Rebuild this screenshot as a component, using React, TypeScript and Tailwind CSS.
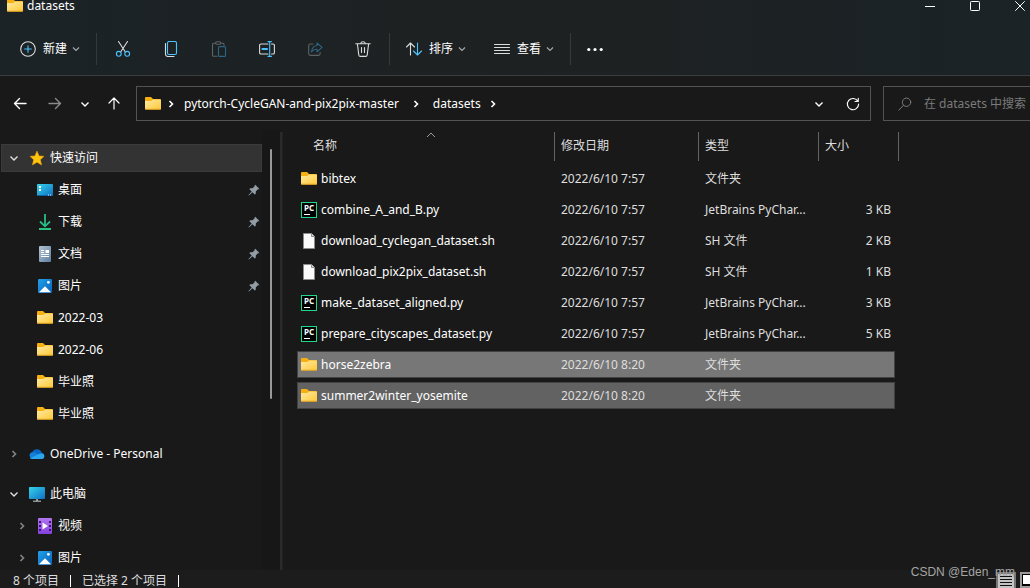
import type { ReactNode } from "react";

type IconName =
  | "folder"
  | "pycharm"
  | "file"
  | "star"
  | "desktop"
  | "download"
  | "document"
  | "picture"
  | "cloud"
  | "computer"
  | "video";

type TreeItem = {
  icon: IconName;
  label: string;
  level: number;
  pinned?: boolean;
  expand?: "open" | "closed";
  active?: boolean;
};

type FileItem = {
  icon: IconName;
  name: string;
  date: string;
  type: string;
  size?: string;
  tint?: string;
};

const treeGroups: TreeItem[][] = [
  [
    { icon: "star", label: "快速访问", level: 0, expand: "open", active: true },
    { icon: "desktop", label: "桌面", level: 1, pinned: true },
    { icon: "download", label: "下载", level: 1, pinned: true },
    { icon: "document", label: "文档", level: 1, pinned: true },
    { icon: "picture", label: "图片", level: 1, pinned: true },
    { icon: "folder", label: "2022-03", level: 1 },
    { icon: "folder", label: "2022-06", level: 1 },
    { icon: "folder", label: "毕业照", level: 1 },
    { icon: "folder", label: "毕业照", level: 1 },
  ],
  [{ icon: "cloud", label: "OneDrive - Personal", level: 0, expand: "closed" }],
  [
    { icon: "computer", label: "此电脑", level: 0, expand: "open" },
    { icon: "video", label: "视频", level: 1, expand: "closed" },
    { icon: "picture", label: "图片", level: 1, expand: "closed" },
  ],
];

const files: FileItem[] = [
  { icon: "folder", name: "bibtex", date: "2022/6/10 7:57", type: "文件夹" },
  { icon: "pycharm", name: "combine_A_and_B.py", date: "2022/6/10 7:57", type: "JetBrains PyChar...", size: "3 KB" },
  { icon: "file", name: "download_cyclegan_dataset.sh", date: "2022/6/10 7:57", type: "SH 文件", size: "2 KB" },
  { icon: "file", name: "download_pix2pix_dataset.sh", date: "2022/6/10 7:57", type: "SH 文件", size: "1 KB" },
  { icon: "pycharm", name: "make_dataset_aligned.py", date: "2022/6/10 7:57", type: "JetBrains PyChar...", size: "3 KB" },
  { icon: "pycharm", name: "prepare_cityscapes_dataset.py", date: "2022/6/10 7:57", type: "JetBrains PyChar...", size: "5 KB" },
  { icon: "folder", name: "horse2zebra", date: "2022/6/10 8:20", type: "文件夹", tint: "bg-[#777777]" },
  { icon: "folder", name: "summer2winter_yosemite", date: "2022/6/10 8:20", type: "文件夹", tint: "bg-[#626262]" },
];

function ItemIcon({ name }: { name: IconName }) {
  if (name === "pycharm") {
    return (
      <span className="flex size-4 shrink-0 flex-col border border-[#21d789] bg-black pt-px pl-[2px] text-[8px] leading-[8px] font-bold text-white">
        <span>PC</span>
        <span className="mt-[2px] h-px w-[6px] bg-white" />
      </span>
    );
  }
  return (
    <svg viewBox="0 0 16 16" className="size-4 shrink-0" aria-hidden="true">
      {name === "folder" && (
        <>
          <path d="M0 2Q0 1 1 1H6L8 3H15Q16 3 16 4V8H0Z" fill="#f8b010" />
          <path d="M0 5.1H6.2L8 3.5H15.2Q16 3.5 16 4.5V12.7Q16 13.5 15.2 13.5H.8Q0 13.5 0 12.7Z" fill="url(#folderFill)" />
          <path d="M0 12.8H16Q16 13.8 15.2 13.8H.8Q0 13.8 0 12.8Z" fill="#e0a021" />
        </>
      )}
      {name === "file" && (
        <>
          <path d="M2.5.5H10.5L13.5 3.5V15.5H2.5Z" fill="#fafafa" stroke="#8c8c8c" />
          <path d="M10.5.5V3.5H13.5" fill="#ddd" stroke="#8c8c8c" />
        </>
      )}
      {name === "star" && (
        <path d="M8 1L10.1 5.9L15 6.3L11.4 9.8L12.6 15L8 12.2L3.4 15L4.6 9.8L1 6.3L5.9 5.9Z" fill="#ffc40c" stroke="#f0a30a" strokeWidth=".5" />
      )}
      {name === "desktop" && (
        <>
          <rect y="2" width="16" height="12" rx="1" fill="url(#screenFill)" />
          <path d="M2 4h2v2H2zM2 7h2v2H2z" fill="#fff" />
          <path d="M0 13H16V13.2Q16 14 15 14H1Q0 14 0 13Z" fill="#0c63a8" />
          <path d="M11 12.4h1v1h-1zM13 12.4h1v1h-1z" fill="#d6f0ff" />
        </>
      )}
      {name === "download" && (
        <>
          <path d="M8 0V12M3 7.5L8 12.3L13 7.5" fill="none" stroke="#27bd87" strokeWidth="1.8" />
          <path d="M2 15H14" stroke="#2fd48e" strokeWidth="1.8" />
        </>
      )}
      {name === "document" && (
        <>
          <rect x="2" width="12" height="16" rx="1" fill="url(#docFill)" />
          <path d="M4 4.5H7M4 6.5H7M4 8.5H12M4 10.5H12" stroke="#fff" />
          <path d="M8.5 4H12V7H8.5Z" fill="#fff" />
        </>
      )}
      {name === "picture" && (
        <>
          <rect x="1" y="1" width="14" height="14" rx="1.2" fill="url(#picFill)" />
          <path d="M2 14.2L8 8.3L14 14.2Z" fill="#fff" />
          <circle cx="11.4" cy="4.3" r="1.4" fill="#fff" />
        </>
      )}
      {name === "cloud" && (
        <>
          <path d="M3.5 13A3.5 3.5 0 0 1 3.2 6.2A5.2 5.2 0 0 1 12.8 6.8A3.2 3.2 0 0 1 13 13Z" fill="#0a66c2" />
          <path d="M3.5 13A3.5 3.5 0 0 1 3.2 6.2Q6 6 9.5 8.6L5 13Z" fill="#137fd8" />
          <path d="M3 13Q2 13 1 12.2L9 8.4Q11 7 13.5 7.6A2.8 2.8 0 0 1 13.2 13Z" fill="#2aa5ee" />
        </>
      )}
      {name === "computer" && (
        <>
          <rect y="1" width="16" height="12" rx=".8" fill="url(#screenFill)" />
          <path d="M7 13H9V15H7Z" fill="#8d949a" />
          <path d="M4 15.2H12" stroke="#c5cace" />
        </>
      )}
      {name === "video" && (
        <>
          <rect x="1" width="14" height="16" rx="1" fill="url(#videoFill)" />
          <path d="M2 3h2v2H2zM2 7h2v2H2zM2 11h2v2H2zM12 3h2v2h-2zM12 7h2v2h-2zM12 11h2v2h-2z" fill="#3b1474" />
          <path d="M5.5 4.5L11 8L5.5 11.5Z" fill="#fff" />
        </>
      )}
    </svg>
  );
}

// shared gradients, referenced by id from the item icons
function IconDefs() {
  return (
    <svg className="absolute size-0" aria-hidden="true">
      <defs>
        <linearGradient id="folderFill" x1="0" y1="0" x2="1" y2="1">
          <stop offset="0" stopColor="#ffe9a2" />
          <stop offset="1" stopColor="#ffc937" />
        </linearGradient>
        <linearGradient id="screenFill" x1="0" y1="0" x2="1" y2="1">
          <stop offset="0" stopColor="#35d3e8" />
          <stop offset="1" stopColor="#0f6fc5" />
        </linearGradient>
        <linearGradient id="docFill" x1="0" y1="0" x2="1" y2="1">
          <stop offset="0" stopColor="#b3c4d6" />
          <stop offset="1" stopColor="#5d7e9d" />
        </linearGradient>
        <linearGradient id="picFill" x1="0" y1="0" x2="1" y2="1">
          <stop offset="0" stopColor="#22a0ea" />
          <stop offset="1" stopColor="#0863bd" />
        </linearGradient>
        <linearGradient id="videoFill" x1="0" y1="0" x2="0" y2="1">
          <stop offset="0" stopColor="#b277f0" />
          <stop offset="1" stopColor="#8440dc" />
        </linearGradient>
      </defs>
    </svg>
  );
}

function Glyph({ children, className = "size-4" }: { children: ReactNode; className?: string }) {
  return (
    <svg viewBox="0 0 16 16" className={`${className} shrink-0`} fill="none" stroke="#dcdcdc" strokeWidth="1.1" strokeLinecap="round" strokeLinejoin="round" aria-hidden="true">
      {children}
    </svg>
  );
}

function ChevronDown({ className = "text-[#a5a8a9]" }: { className?: string }) {
  return (
    <svg viewBox="0 0 10 10" className={`size-[10px] shrink-0 ${className}`} fill="none" stroke="currentColor" strokeWidth="1.4" aria-hidden="true">
      <path d="M1.5 3.5L5 7L8.5 3.5" />
    </svg>
  );
}

function SmallChevron() {
  return (
    <svg viewBox="0 0 8 8" className="-ml-[2px] size-2 shrink-0" fill="none" stroke="#a5a8a9" strokeWidth="1.2" aria-hidden="true">
      <path d="M1 2.5L4 5.5L7 2.5" />
    </svg>
  );
}

function ChevronRight({ className = "text-white" }: { className?: string }) {
  return (
    <svg viewBox="0 0 10 10" className={`size-[10px] shrink-0 ${className}`} fill="none" stroke="currentColor" strokeWidth="1.6" aria-hidden="true">
      <path d="M3.5 2L6.5 5L3.5 8" />
    </svg>
  );
}

function Divider() {
  return <span className="h-8 w-px shrink-0 bg-[#34393b]" />;
}

function ToolButton({ label, children }: { label: string; children: ReactNode }) {
  return (
    <button type="button" aria-label={label} className="flex h-9 w-12 shrink-0 items-center justify-center">
      <Glyph>{children}</Glyph>
    </button>
  );
}

function TitleBar() {
  return (
    <div className="flex h-3 items-center pl-[7px]">
      <ItemIcon name="folder" />
      <h1 className="ml-1 flex-1 leading-3">datasets</h1>
      <button type="button" aria-label="最小化" className="flex w-[45px] justify-center">
        <svg viewBox="0 0 10 10" className="size-[10px]" stroke="#fff"><path d="M0 5.5H10" /></svg>
      </button>
      <button type="button" aria-label="最大化" className="flex w-[45px] justify-center">
        <svg viewBox="0 0 10 10" className="size-[10px]" fill="none" stroke="#fff"><rect x=".5" y=".5" width="9" height="9" rx=".8" /></svg>
      </button>
      <button type="button" aria-label="关闭" className="-mr-3 flex w-[45px] justify-center">
        <svg viewBox="0 0 10 10" className="size-[10px]" stroke="#fff"><path d="M.3 .3L9.7 9.7M9.7 .3L.3 9.7" /></svg>
      </button>
    </div>
  );
}

function Toolbar() {
  return (
    <div className="mt-[11px] flex h-[52px] items-center pl-5">
      <button type="button" className="mr-4 flex items-center gap-[7px]">
        <Glyph>
          <circle cx="8" cy="8" r="7.3" />
          <path d="M8 4.7V11.3M4.7 8H11.3" stroke="#4cc2ff" />
        </Glyph>
        新建
        <SmallChevron />
      </button>
      <Divider />
      <div className="mx-[2px] flex">
        <ToolButton label="剪切">
          <path d="M3.5 .5L10.2 10.8M12.5 .5L5.8 10.8" />
          <circle cx="3.8" cy="12.8" r="2.4" stroke="#4cc2ff" />
          <circle cx="12.2" cy="12.8" r="2.4" stroke="#4cc2ff" />
        </ToolButton>
        <ToolButton label="复制">
          <path d="M2.5 2.5V13Q2.5 15.5 5 15.5H11" />
          <rect x="4.5" y=".5" width="9" height="13" rx="1.5" stroke="#4cc2ff" />
        </ToolButton>
        <ToolButton label="粘贴">
          <g stroke="#5d6365">
            <path d="M4.5 2.2H2.5Q1.5 2.2 1.5 3.2V14.2Q1.5 15.2 2.5 15.2H6M10 2.2H12Q13 2.2 13 3.2V4.2" />
            <rect x="4.7" y=".7" width="5" height="2.6" rx="1" />
          </g>
          <rect x="7.5" y="5.6" width="7" height="9.8" rx="1" stroke="#2d6585" />
        </ToolButton>
        <ToolButton label="重命名">
          <path d="M9 3H2Q.6 3 .6 4.3V11.7Q.6 13 2 13H9M12.5 3H14Q15.4 3 15.4 4.3V11.7Q15.4 13 14 13H12.5" />
          <path d="M9 .6H12.4M10.7 .6V15.4M9 15.4H12.4" stroke="#4cc2ff" />
          <path d="M3.5 8H8" stroke="#4cc2ff" strokeWidth="2.2" />
        </ToolButton>
        <ToolButton label="共享">
          <path d="M6 3H3.3Q1.7 3 1.7 4.6V12.8Q1.7 14.4 3.3 14.4H11.5Q13.1 14.4 13.1 12.8V11.5" stroke="#5d6365" />
          <path d="M10 2L15 6.4L10 10.8V8.3Q6.5 8 4.5 11Q5 5 10 4.5Z" stroke="#2d6585" />
        </ToolButton>
        <ToolButton label="删除">
          <path d="M.8 2.7H15.2M5.7 2.5Q6 .7 8 .7T10.3 2.5M2.4 3L3.8 14Q4 15.4 5.3 15.4H10.7Q12 15.4 12.2 14L13.6 3M6.5 6.5V11.5M9.5 6.5V11.5" />
        </ToolButton>
      </div>
      <Divider />
      <button type="button" className="ml-4 flex items-center gap-[7px]">
        <Glyph>
          <path d="M4.5 14V2M.5 6L4.5 2L8.5 6" />
          <path d="M11.5 2V14M7.5 10L11.5 14L15.5 10" stroke="#4cc2ff" />
        </Glyph>
        排序
        <SmallChevron />
      </button>
      <button type="button" className="mr-4 ml-7 flex items-center gap-[7px]">
        <Glyph><path d="M.5 3.5H15.5M.5 6.5H15.5M.5 9.5H15.5M.5 12.5H15.5" strokeWidth="1" /></Glyph>
        查看
        <SmallChevron />
      </button>
      <Divider />
      <button type="button" aria-label="查看更多" className="ml-4">
        <svg viewBox="0 0 16 16" className="size-4" fill="#fff">
          <circle cx="1.8" cy="8.5" r="1.6" />
          <circle cx="8" cy="8.5" r="1.6" />
          <circle cx="14.2" cy="8.5" r="1.6" />
        </svg>
      </button>
    </div>
  );
}

function AddressRow() {
  return (
    <div className="flex items-center bg-[#191919] pt-[10px] pb-[9px] pl-[2px]">
      <button type="button" aria-label="后退" className="flex w-[35px] shrink-0 justify-center">
        <Glyph><path d="M2.5 7.5H14M7.5 2.5L2.5 7.5L7.5 12.5" stroke="#fff" strokeWidth="1.4" /></Glyph>
      </button>
      <button type="button" aria-label="前进" className="flex w-[35px] shrink-0 justify-center">
        <Glyph><path d="M2 7.5H13.5M8.5 2.5L13.5 7.5L8.5 12.5" stroke="#8b8b8b" strokeWidth="1.4" /></Glyph>
      </button>
      <button type="button" aria-label="最近浏览的位置" className="flex w-[25px] shrink-0 justify-center">
        <ChevronDown className="text-white" />
      </button>
      <button type="button" aria-label="向上" className="flex w-[34px] shrink-0 justify-center">
        <Glyph><path d="M8 13V2M3 7L8 2L13 7" stroke="#fff" strokeWidth="1.2" /></Glyph>
      </button>
      <nav aria-label="地址" className="ml-[5px] flex h-[35px] flex-1 items-center border border-[#535353] pr-[10px] pl-2">
        <ItemIcon name="folder" />
        <span className="ml-[2px] flex w-4 justify-center"><ChevronRight /></span>
        <a href="#master" className="ml-[5px]">pytorch-CycleGAN-and-pix2pix-master</a>
        <span className="flex w-[34px] justify-center"><ChevronRight /></span>
        <a href="#datasets">datasets</a>
        <span className="flex w-[25px] justify-center"><ChevronRight /></span>
        <button type="button" aria-label="以前的位置" className="ml-auto flex">
          <ChevronDown className="text-white" />
        </button>
        <button type="button" aria-label="刷新" className="ml-[22px]">
          <Glyph className="size-[14px]">
            <path d="M13.6 5A6.4 6.4 0 1 0 14.4 8M14 1.5V5.2H10.3" stroke="#fff" strokeWidth="1.3" />
          </Glyph>
        </button>
      </nav>
      <label className="ml-3 flex h-[35px] w-[147px] shrink-0 items-center border border-r-0 border-[#535353] pl-[14px]">
        <Glyph className="size-[14px]">
          <circle cx="9.8" cy="6" r="4.8" stroke="#7d7d7d" />
          <path d="M6.2 9.6L1 15" stroke="#7d7d7d" />
        </Glyph>
        <input
          type="text"
          aria-label="搜索"
          placeholder="在 datasets 中搜索"
          className="ml-3 w-0 flex-1 bg-transparent outline-none placeholder:text-[#7b7b7b]"
        />
      </label>
    </div>
  );
}

function TreeRow({ item }: { item: TreeItem }) {
  return (
    <li className="py-[2px]">
      <a
        href="#folder"
        className={`flex h-7 items-center border pr-px ${item.level ? "pl-[15px]" : "pl-[7px]"} ${item.active ? "border-[#3b3b3b] bg-[#333333]" : "border-transparent"}`}
      >
        <span className="flex w-[10px] shrink-0">
          {item.expand === "open" && <ChevronDown className="text-[#e0e0e0]" />}
          {item.expand === "closed" && <ChevronRight className="text-[#858585]" />}
        </span>
        <span className="mr-[5px] ml-[10px]"><ItemIcon name={item.icon} /></span>
        <span className="flex-1 truncate">{item.label}</span>
        {item.pinned && (
          <svg viewBox="0 0 12 12" className="size-3 shrink-0" fill="#939da5" aria-hidden="true">
            <path d="M7.2.8L11.2 4.8L10.4 5.5L9.8 5.3L7.8 7.5L7.7 10L6.8 10.6L4.4 8.3L1.2 11.3L.6 11.4L.7 10.8L3.7 7.6L1.4 5.2L2 4.3L4.5 4.2L6.7 2.2L6.5 1.5Z" />
          </svg>
        )}
      </a>
    </li>
  );
}

function Sidebar() {
  return (
    <aside className="flex w-[283px] shrink-0 overflow-hidden">
      <nav aria-label="导航窗格" className="flex flex-1 flex-col gap-2 pt-3 pl-px">
        {treeGroups.map((group, i) => (
          <ul key={i}>
            {group.map((item, j) => (
              <TreeRow key={j} item={item} />
            ))}
          </ul>
        ))}
      </nav>
      <div className="flex w-[18px] bg-[#171717] pt-[19px] pl-2">
        <div className="h-[250px] w-[2px] rounded-full bg-[#9a9a9a]" />
      </div>
      <div className="mt-[2px] w-[3px] border-r border-[#222222] bg-[#2a2a2a]" />
    </aside>
  );
}

function FileTable() {
  return (
    <main className="min-w-0 flex-1 overflow-hidden pl-[14px]">
      <table className="-mt-[2px] w-[602px] table-fixed border-separate border-spacing-x-0 border-spacing-y-1 text-left">
        <colgroup>
          <col className="w-[258px]" />
          <col className="w-[144px]" />
          <col className="w-[120px]" />
          <col className="w-[76px]" />
          <col className="w-1" />
        </colgroup>
        <thead>
          <tr className="h-[29px] text-[#dedede]">
            <th className="relative border-r border-[#636363] p-0 pb-[2px] pl-4 font-normal">
              名称
              <svg viewBox="0 0 10 6" className="absolute top-0 left-[129px] h-[6px] w-[10px]" fill="none" stroke="#9b9b9b" aria-hidden="true">
                <path d="M1 5L5 1L9 5" />
              </svg>
            </th>
            <th className="border-r border-[#636363] p-0 pb-[2px] pl-[6px] font-normal">修改日期</th>
            <th className="border-r border-[#636363] p-0 pb-[2px] pl-[6px] font-normal">类型</th>
            <th className="p-0 pb-[2px] pl-[6px] font-normal">大小</th>
            <td className="border-r border-[#636363] p-0" />
          </tr>
        </thead>
        <tbody>
          {files.map((file) => {
            const cell = file.tint ? `border-y border-[#424242] ${file.tint}` : "";
            return (
              <tr key={file.name} className="h-[27px] text-[#dedede]">
                <td className={`p-0 text-white ${cell} ${file.tint ? "border-l pl-[3px]" : "pl-1"}`}>
                  <div className="flex items-center gap-1">
                    <ItemIcon name={file.icon} />
                    {file.name}
                  </div>
                </td>
                <td className={`p-0 pl-[6px] ${cell}`}>{file.date}</td>
                <td className={`p-0 pl-[6px] whitespace-nowrap ${cell}`}>{file.type}</td>
                <td className={`p-0 pr-1 text-right ${cell} ${file.tint ? "border-r" : ""}`}>{file.size}</td>
              </tr>
            );
          })}
        </tbody>
      </table>
    </main>
  );
}

function StatusBar() {
  return (
    <footer className="relative flex h-[18px] shrink-0 items-end bg-[#1c1c1c] pl-[13px] leading-[14px] text-[#dedede]">
      <span>8 个项目</span>
      <span className="mx-[11px] mb-px h-3 w-px bg-white" />
      <span>已选择 2 个项目</span>
      <span className="mx-[11px] mb-px h-3 w-px bg-white" />
      <div className="ml-auto flex gap-1">
        <button type="button" aria-label="详细信息" className="flex h-4 w-5 justify-center border-2 border-b-0 border-[#777777] bg-[#c4c4c4] pt-[2px]">
          <svg viewBox="0 0 12 12" className="h-3 w-3" stroke="#111" aria-hidden="true">
            <path d="M0 .5H12M0 3.5H12M0 6.5H12M0 9.5H12" />
          </svg>
        </button>
        <button type="button" aria-label="大缩略图" className="-mr-[10px] flex h-4 w-5 border-2 border-[#9a9a9a] bg-black">
          <span className="mt-px ml-px h-[9px] w-4 bg-white" />
        </button>
      </div>
      <span className="absolute -top-[5px] right-[15px] font-['Liberation_Sans',sans-serif] text-[#a5a5a5] text-shadow-2xs">CSDN @Eden_mm</span>
    </footer>
  );
}

export default function App() {
  return (
    <div className="flex h-screen flex-col overflow-hidden bg-[#191919] font-['Noto_Sans','Noto_Sans_CJK_SC',sans-serif] text-xs text-white">
      <IconDefs />
      <header className="shrink-0 border-b border-[#3b3e3e] bg-linear-to-r from-[#1b2326] via-[#1e2122] to-[#1b2326]">
        <TitleBar />
        <Toolbar />
      </header>
      <AddressRow />
      <div className="flex min-h-0 flex-1">
        <Sidebar />
        <FileTable />
      </div>
      <StatusBar />
    </div>
  );
}
